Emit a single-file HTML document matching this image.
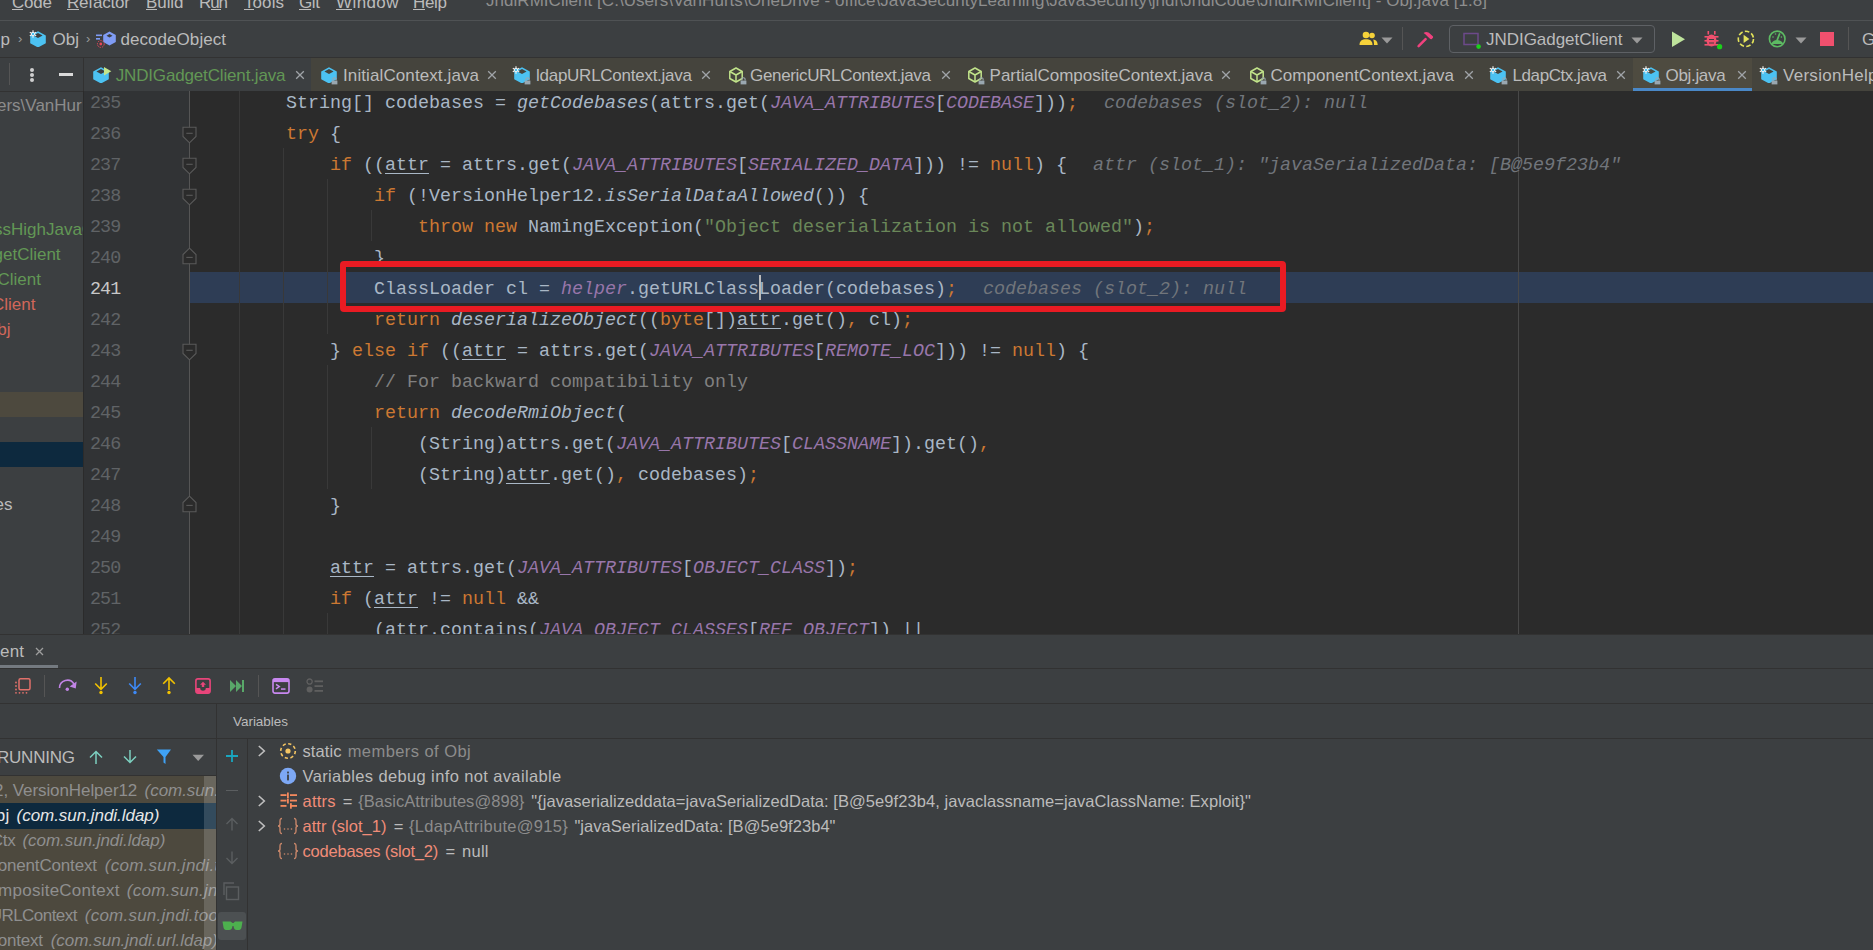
<!DOCTYPE html>
<html><head><meta charset="utf-8"><style>
html,body{margin:0;padding:0;}
body{width:1873px;height:950px;overflow:hidden;position:relative;background:#3C3F41;font-family:"Liberation Sans", sans-serif;}
.t{position:absolute;white-space:pre;line-height:0;font-family:"Liberation Sans", sans-serif;}

.cl,.hint,.ln{position:absolute;white-space:pre;font-family:"Liberation Mono",monospace;font-size:18.3333px;line-height:31px;height:31px}
.cl{color:#A9B7C6}
.k{color:#CC7832}.d{color:#A9B7C6}.c{color:#9876AA;font-style:italic}.i{font-style:italic}.s{color:#6A8759}.m{color:#808080}
.u{text-decoration:underline;text-underline-offset:3px;text-decoration-thickness:1px}
.hint{color:#71757B;font-style:italic}
.ln{color:#606366;font-size:18.3333px;letter-spacing:-0.9px}
.ln.cur{color:#C8C8C8}

</style></head><body>
<div class='t' style='left:12px;top:3.00px;font-size:17px;color:#BBBBBB;letter-spacing:-0.214px;'>Code</div>
<div class='t' style='left:67px;top:3.00px;font-size:17px;color:#BBBBBB;letter-spacing:-0.179px;'>Refactor</div>
<div class='t' style='left:146px;top:3.00px;font-size:17px;color:#BBBBBB;letter-spacing:-0.078px;'>Build</div>
<div class='t' style='left:199px;top:3.00px;font-size:17px;color:#BBBBBB;letter-spacing:-1.094px;'>Run</div>
<div class='t' style='left:244px;top:3.00px;font-size:17px;color:#BBBBBB;letter-spacing:0.078px;'>Tools</div>
<div class='t' style='left:299px;top:3.00px;font-size:17px;color:#BBBBBB;letter-spacing:-0.367px;'>Git</div>
<div class='t' style='left:336px;top:3.00px;font-size:17px;color:#BBBBBB;letter-spacing:0.406px;'>Window</div>
<div class='t' style='left:413px;top:3.00px;font-size:17px;color:#BBBBBB;letter-spacing:-0.323px;'>Help</div>
<div style='position:absolute;left:12px;top:9px;width:11px;height:1px;background:#BBBBBB;'></div>
<div style='position:absolute;left:67px;top:9px;width:12px;height:1px;background:#BBBBBB;'></div>
<div style='position:absolute;left:146px;top:9px;width:11px;height:1px;background:#BBBBBB;'></div>
<div style='position:absolute;left:211px;top:9px;width:10px;height:1px;background:#BBBBBB;'></div>
<div style='position:absolute;left:244px;top:9px;width:10px;height:1px;background:#BBBBBB;'></div>
<div style='position:absolute;left:299px;top:9px;width:12px;height:1px;background:#BBBBBB;'></div>
<div style='position:absolute;left:336px;top:9px;width:16px;height:1px;background:#BBBBBB;'></div>
<div style='position:absolute;left:413px;top:9px;width:12px;height:1px;background:#BBBBBB;'></div>
<div class='t' style='left:486px;top:1.00px;font-size:17px;color:#8E8E8E;letter-spacing:0.037px;'>JndiRMIClient [C:\Users\VanHurts\OneDrive - office\JavaSecurityLearning\JavaSecurity\jndi\JndiCode\JndiRMIClient] - Obj.java [1.8]</div>
<div style='position:absolute;left:0px;top:20px;width:1873px;height:1px;background:#4F5254;'></div>
<div style='position:absolute;left:0px;top:57px;width:1873px;height:1px;background:#323232;'></div>
<div class='t' style='left:0.5px;top:39.99px;font-size:17px;color:#BBBBBB;letter-spacing:0.000px;'>p</div>
<div class='t' style='left:18px;top:39.05px;font-size:13px;color:#9A9A9A;letter-spacing:0.000px;'>›</div>
<div class='t' style='left:52.5px;top:39.99px;font-size:17px;color:#BBBBBB;letter-spacing:0.016px;'>Obj</div>
<div class='t' style='left:86px;top:39.05px;font-size:13px;color:#9A9A9A;letter-spacing:0.000px;'>›</div>
<div class='t' style='left:120.5px;top:39.99px;font-size:17px;color:#BBBBBB;letter-spacing:0.054px;'>decodeObject</div>
<div class='t' style='left:1486px;top:39.99px;font-size:17px;color:#BBBBBB;letter-spacing:-0.034px;'>JNDIGadgetClient</div>
<div class='t' style='left:1862px;top:39.99px;font-size:17px;color:#BBBBBB;letter-spacing:0.000px;'>G</div>
<div style='position:absolute;left:83px;top:58px;width:1790px;height:33px;background:#45443D;'></div>
<div style='position:absolute;left:83px;top:58px;width:228px;height:33px;background:#3C3F41;'></div>
<div style='position:absolute;left:83px;top:58px;width:1px;height:33px;background:#323232;'></div>
<div style='position:absolute;left:1633px;top:58px;width:119px;height:33px;background:#4E4B40;'></div>
<div style='position:absolute;left:1633px;top:88px;width:119px;height:4px;background:#4A88C7;'></div>
<div style='position:absolute;left:9px;top:63px;width:1px;height:22px;background:#555555;'></div>
<div style='position:absolute;left:30px;top:68px;width:4px;height:4px;border-radius:2px;background:#CFCFCF'></div>
<div style='position:absolute;left:30px;top:73px;width:4px;height:4px;border-radius:2px;background:#CFCFCF'></div>
<div style='position:absolute;left:30px;top:78px;width:4px;height:4px;border-radius:2px;background:#CFCFCF'></div>
<div style='position:absolute;left:59px;top:73px;width:14px;height:3px;background:#DADADA;'></div>
<div class='t' style='left:115.7px;top:76.00px;font-size:17px;color:#629755;letter-spacing:-0.156px;'>JNDIGadgetClient.java</div>
<svg style='position:absolute;left:294.5px;top:70px' width='10' height='10' viewBox='0 0 10 10'><path d='M1.2 1.2L8.8 8.8M8.8 1.2L1.2 8.8' stroke='#A0A4A8' stroke-width='1.3'/></svg>
<div class='t' style='left:343px;top:76.00px;font-size:17px;color:#BBBBBB;letter-spacing:0.101px;'>InitialContext.java</div>
<svg style='position:absolute;left:486.5px;top:70px' width='10' height='10' viewBox='0 0 10 10'><path d='M1.2 1.2L8.8 8.8M8.8 1.2L1.2 8.8' stroke='#A0A4A8' stroke-width='1.3'/></svg>
<div class='t' style='left:536px;top:76.00px;font-size:17px;color:#BBBBBB;letter-spacing:-0.259px;'>ldapURLContext.java</div>
<svg style='position:absolute;left:700.5px;top:70px' width='10' height='10' viewBox='0 0 10 10'><path d='M1.2 1.2L8.8 8.8M8.8 1.2L1.2 8.8' stroke='#A0A4A8' stroke-width='1.3'/></svg>
<div class='t' style='left:750px;top:76.00px;font-size:17px;color:#BBBBBB;letter-spacing:-0.335px;'>GenericURLContext.java</div>
<svg style='position:absolute;left:940.5px;top:70px' width='10' height='10' viewBox='0 0 10 10'><path d='M1.2 1.2L8.8 8.8M8.8 1.2L1.2 8.8' stroke='#A0A4A8' stroke-width='1.3'/></svg>
<div class='t' style='left:989.6px;top:76.00px;font-size:17px;color:#BBBBBB;letter-spacing:-0.035px;'>PartialCompositeContext.java</div>
<svg style='position:absolute;left:1220.5px;top:70px' width='10' height='10' viewBox='0 0 10 10'><path d='M1.2 1.2L8.8 8.8M8.8 1.2L1.2 8.8' stroke='#A0A4A8' stroke-width='1.3'/></svg>
<div class='t' style='left:1270.4px;top:76.00px;font-size:17px;color:#BBBBBB;letter-spacing:0.060px;'>ComponentContext.java</div>
<svg style='position:absolute;left:1463.5px;top:70px' width='10' height='10' viewBox='0 0 10 10'><path d='M1.2 1.2L8.8 8.8M8.8 1.2L1.2 8.8' stroke='#A0A4A8' stroke-width='1.3'/></svg>
<div class='t' style='left:1512.6px;top:76.00px;font-size:17px;color:#BBBBBB;letter-spacing:-0.439px;'>LdapCtx.java</div>
<svg style='position:absolute;left:1615.5px;top:70px' width='10' height='10' viewBox='0 0 10 10'><path d='M1.2 1.2L8.8 8.8M8.8 1.2L1.2 8.8' stroke='#A0A4A8' stroke-width='1.3'/></svg>
<div class='t' style='left:1665.6px;top:76.00px;font-size:17px;color:#BBBBBB;letter-spacing:-0.339px;'>Obj.java</div>
<svg style='position:absolute;left:1736.5px;top:70px' width='10' height='10' viewBox='0 0 10 10'><path d='M1.2 1.2L8.8 8.8M8.8 1.2L1.2 8.8' stroke='#A0A4A8' stroke-width='1.3'/></svg>
<div class='t' style='left:1783px;top:76.00px;font-size:17px;color:#BBBBBB;letter-spacing:0.284px;'>VersionHelper12.java</div>
<div style='position:absolute;left:0;top:91px;width:83px;height:543px;overflow:hidden;background:#3C3F41'>
<div style='position:absolute;left:0px;top:301px;width:83px;height:25px;background:#4D493E;'></div>
<div style='position:absolute;left:0px;top:351px;width:83px;height:25px;background:#0D293E;'></div>
<div class='t' style='left:-3px;top:15.00px;font-size:17px;color:#8C8C8C;letter-spacing:0.000px;'>ers\VanHur</div>
<div class='t' style='left:-6px;top:139.00px;font-size:17px;color:#629755;letter-spacing:0.000px;'>ssHighJavaClient</div>
<div class='t' style='left:-6.5px;top:164.00px;font-size:17px;color:#629755;letter-spacing:0.000px;'>getClient</div>
<div class='t' style='left:-2.5px;top:189.00px;font-size:17px;color:#629755;letter-spacing:0.000px;'>Client</div>
<div class='t' style='left:-8px;top:214.00px;font-size:17px;color:#D1675A;letter-spacing:0.000px;'>Client</div>
<div class='t' style='left:-16px;top:239.00px;font-size:17px;color:#D1675A;letter-spacing:0.000px;'>Obj</div>
<div class='t' style='left:-48px;top:414.00px;font-size:17px;color:#BBBBBB;letter-spacing:0.000px;'>Classes</div>
</div>
<div style='position:absolute;left:83px;top:91px;width:1px;height:543px;background:#2B2B2B;'></div>
<div style='position:absolute;left:0px;top:91px;width:83px;height:1px;background:#323232;'></div>
<div id='ed' style='position:absolute;left:84px;top:91px;width:1789px;height:543px;overflow:hidden;background:#2B2B2B'>
<div style='position:absolute;left:0px;top:0px;width:106px;height:543px;background:#313335;'></div>
<div style='position:absolute;left:106px;top:181px;width:1789px;height:31px;background:#2E3D55;'></div>
<div style='position:absolute;left:0px;top:181px;width:106px;height:31px;background:#313335;'></div>
<div style='position:absolute;left:155px;top:0px;width:1px;height:543px;background:#393939;'></div>
<div style='position:absolute;left:199px;top:57px;width:1px;height:486px;background:#393939;'></div>
<div style='position:absolute;left:243px;top:88px;width:1px;height:155px;background:#393939;'></div>
<div style='position:absolute;left:243px;top:274px;width:1px;height:124px;background:#393939;'></div>
<div style='position:absolute;left:243px;top:522px;width:1px;height:21px;background:#393939;'></div>
<div style='position:absolute;left:287px;top:119px;width:1px;height:31px;background:#393939;'></div>
<div style='position:absolute;left:287px;top:336px;width:1px;height:62px;background:#393939;'></div>
<div style='position:absolute;left:1434px;top:0px;width:1px;height:543px;background:#484848;'></div>
<div style='position:absolute;left:105px;top:0px;width:1px;height:543px;background:#555555;'></div>
</div>
<div style='position:absolute;left:84px;top:91px;width:1789px;height:543px;overflow:hidden'>
<div class='hint' style='left:1020px;top:-3.5px'>codebases (slot_2): null</div>
<div class='cl' style='left:114px;top:-3.5px'><span class='d'>        String[] codebases = </span><span class='i'>getCodebases</span><span class='d'>(attrs.get(</span><span class='c'>JAVA_ATTRIBUTES</span><span class='d'>[</span><span class='c'>CODEBASE</span><span class='d'>]))</span><span class='k'>;</span></div>
<div class='ln' style='left:6px;top:-3.5px'>235</div>
<div class='cl' style='left:114px;top:27.5px'><span class='k'>        try </span><span class='d'>{</span></div>
<div class='ln' style='left:6px;top:27.5px'>236</div>
<div class='hint' style='left:1009px;top:58.5px'>attr (slot_1): &quot;javaSerializedData: [B@5e9f23b4&quot;</div>
<div class='cl' style='left:114px;top:58.5px'><span class='k'>            if </span><span class='d'>((</span><span class='u'>attr</span><span class='d'> = attrs.get(</span><span class='c'>JAVA_ATTRIBUTES</span><span class='d'>[</span><span class='c'>SERIALIZED_DATA</span><span class='d'>])) != </span><span class='k'>null</span><span class='d'>) {</span></div>
<div class='ln' style='left:6px;top:58.5px'>237</div>
<div class='cl' style='left:114px;top:89.5px'><span class='k'>                if </span><span class='d'>(!VersionHelper12.</span><span class='i'>isSerialDataAllowed</span><span class='d'>()) {</span></div>
<div class='ln' style='left:6px;top:89.5px'>238</div>
<div class='cl' style='left:114px;top:120.5px'><span class='k'>                    throw new </span><span class='d'>NamingException(</span><span class='s'>&quot;Object deserialization is not allowed&quot;</span><span class='d'>)</span><span class='k'>;</span></div>
<div class='ln' style='left:6px;top:120.5px'>239</div>
<div class='cl' style='left:114px;top:151.5px'><span class='d'>                }</span></div>
<div class='ln' style='left:6px;top:151.5px'>240</div>
<div class='hint' style='left:899px;top:182.5px'>codebases (slot_2): null</div>
<div class='cl' style='left:114px;top:182.5px'><span class='d'>                ClassLoader cl = </span><span class='c'>helper</span><span class='d'>.getURLClassLoader(codebases)</span><span class='k'>;</span></div>
<div class='ln cur' style='left:6px;top:182.5px'>241</div>
<div class='cl' style='left:114px;top:213.5px'><span class='k'>                return </span><span class='i'>deserializeObject</span><span class='d'>((</span><span class='k'>byte</span><span class='d'>[])</span><span class='u'>attr</span><span class='d'>.get()</span><span class='k'>,</span><span class='d'> cl)</span><span class='k'>;</span></div>
<div class='ln' style='left:6px;top:213.5px'>242</div>
<div class='cl' style='left:114px;top:244.5px'><span class='d'>            } </span><span class='k'>else if </span><span class='d'>((</span><span class='u'>attr</span><span class='d'> = attrs.get(</span><span class='c'>JAVA_ATTRIBUTES</span><span class='d'>[</span><span class='c'>REMOTE_LOC</span><span class='d'>])) != </span><span class='k'>null</span><span class='d'>) {</span></div>
<div class='ln' style='left:6px;top:244.5px'>243</div>
<div class='cl' style='left:114px;top:275.5px'><span class='m'>                // For backward compatibility only</span></div>
<div class='ln' style='left:6px;top:275.5px'>244</div>
<div class='cl' style='left:114px;top:306.5px'><span class='k'>                return </span><span class='i'>decodeRmiObject</span><span class='d'>(</span></div>
<div class='ln' style='left:6px;top:306.5px'>245</div>
<div class='cl' style='left:114px;top:337.5px'><span class='d'>                    (String)attrs.get(</span><span class='c'>JAVA_ATTRIBUTES</span><span class='d'>[</span><span class='c'>CLASSNAME</span><span class='d'>]).get()</span><span class='k'>,</span></div>
<div class='ln' style='left:6px;top:337.5px'>246</div>
<div class='cl' style='left:114px;top:368.5px'><span class='d'>                    (String)</span><span class='u'>attr</span><span class='d'>.get()</span><span class='k'>,</span><span class='d'> codebases)</span><span class='k'>;</span></div>
<div class='ln' style='left:6px;top:368.5px'>247</div>
<div class='cl' style='left:114px;top:399.5px'><span class='d'>            }</span></div>
<div class='ln' style='left:6px;top:399.5px'>248</div>
<div class='cl' style='left:114px;top:430.5px'></div>
<div class='ln' style='left:6px;top:430.5px'>249</div>
<div class='cl' style='left:114px;top:461.5px'>            <span class='u'>attr</span><span class='d'> = attrs.get(</span><span class='c'>JAVA_ATTRIBUTES</span><span class='d'>[</span><span class='c'>OBJECT_CLASS</span><span class='d'>])</span><span class='k'>;</span></div>
<div class='ln' style='left:6px;top:461.5px'>250</div>
<div class='cl' style='left:114px;top:492.5px'><span class='k'>            if </span><span class='d'>(</span><span class='u'>attr</span><span class='d'> != </span><span class='k'>null </span><span class='d'>&amp;&amp;</span></div>
<div class='ln' style='left:6px;top:492.5px'>251</div>
<div class='cl' style='left:114px;top:523.5px'><span class='d'>                (attr.contains(</span><span class='c'>JAVA_OBJECT_CLASSES</span><span class='d'>[</span><span class='c'>REF_OBJECT</span><span class='d'>]) ||</span></div>
<div class='ln' style='left:6px;top:523.5px'>252</div>
</div>
<div style='position:absolute;left:759px;top:275px;width:2px;height:25px;background:#BBBBBB;'></div>
<div style='position:absolute;left:339.5px;top:261px;width:934.5px;height:39px;border:6px solid #E91B23;border-radius:4px'></div>
<div style='position:absolute;left:0px;top:634px;width:1873px;height:316px;background:#3C3F41;'></div>
<div style='position:absolute;left:0px;top:634px;width:1873px;height:1px;background:#323232;'></div>
<div class='t' style='left:0px;top:652.00px;font-size:17px;color:#BBBBBB;letter-spacing:0.180px;'>ent</div>
<svg style='position:absolute;left:35px;top:647px' width='9' height='9' viewBox='0 0 9 9'><path d='M1 1L8 8M8 1L1 8' stroke='#9E9E9E' stroke-width='1.3'/></svg>
<div style='position:absolute;left:0px;top:665px;width:58px;height:3px;background:#747A80;'></div>
<div style='position:absolute;left:0px;top:668px;width:1873px;height:1px;background:#323232;'></div>
<div style='position:absolute;left:0px;top:703px;width:1873px;height:1px;background:#323232;'></div>
<div style='position:absolute;left:44px;top:675px;width:1px;height:22px;background:#555555;'></div>
<div style='position:absolute;left:258px;top:675px;width:1px;height:22px;background:#555555;'></div>
<div style='position:absolute;left:216px;top:704px;width:1px;height:246px;background:#323232;'></div>
<div class='t' style='left:233px;top:721.92px;font-size:13.5px;color:#BBBBBB;letter-spacing:-0.035px;'>Variables</div>
<div style='position:absolute;left:0px;top:738px;width:1873px;height:1px;background:#323232;'></div>
<div class='t' style='left:-3px;top:758.00px;font-size:17px;color:#BBBBBB;letter-spacing:-0.224px;'>RUNNING</div>
<div style='position:absolute;left:0px;top:775px;width:216px;height:1px;background:#323232;'></div>
<div style='position:absolute;left:0px;top:776px;width:216px;height:174px;background:#4D493E;'></div>
<div style='position:absolute;left:0px;top:803px;width:216px;height:26px;background:#0D293E;'></div>
<div style='position:absolute;left:0;top:776px;width:216px;height:174px;overflow:hidden'>
<div class='t' style='left:-6px;top:14.50px;font-size:17px;color:#8F8F8F;letter-spacing:-0.076px;'>2, VersionHelper12</div>
<div class='t' style='left:144.6px;top:14.50px;font-size:17px;color:#8F8F8F;letter-spacing:-0.046px;font-style:italic'>(com.sun.jndi.ldap)</div>
<div class='t' style='left:-17.5px;top:39.99px;font-size:17px;color:#E6E6E6;letter-spacing:0.116px;'>Obj</div>
<div class='t' style='left:16.6px;top:39.99px;font-size:17px;color:#E6E6E6;letter-spacing:-0.046px;font-style:italic'>(com.sun.jndi.ldap)</div>
<div class='t' style='left:-46px;top:65.00px;font-size:17px;color:#8F8F8F;letter-spacing:-0.271px;'>LdapCtx</div>
<div class='t' style='left:22.5px;top:65.00px;font-size:17px;color:#8F8F8F;letter-spacing:-0.046px;font-style:italic'>(com.sun.jndi.ldap)</div>
<div class='t' style='left:-47px;top:90.00px;font-size:17px;color:#8F8F8F;letter-spacing:-0.166px;'>ComponentContext</div>
<div class='t' style='left:104.7px;top:90.00px;font-size:17px;color:#8F8F8F;letter-spacing:0.278px;font-style:italic'>(com.sun.jndi.toolkit.ctx)</div>
<div class='t' style='left:-74px;top:115.00px;font-size:17px;color:#8F8F8F;letter-spacing:0.244px;'>PartialCompositeContext</div>
<div class='t' style='left:126.8px;top:115.00px;font-size:17px;color:#8F8F8F;letter-spacing:0.274px;font-style:italic'>(com.sun.jndi.toolkit.ctx)</div>
<div class='t' style='left:-66px;top:140.00px;font-size:17px;color:#8F8F8F;letter-spacing:-0.545px;'>GenericURLContext</div>
<div class='t' style='left:84.8px;top:140.00px;font-size:17px;color:#8F8F8F;letter-spacing:0.227px;font-style:italic'>(com.sun.jndi.toolkit.url)</div>
<div class='t' style='left:-79px;top:165.00px;font-size:17px;color:#8F8F8F;letter-spacing:-0.212px;'>ldapURLContext</div>
<div class='t' style='left:50.7px;top:165.00px;font-size:17px;color:#8F8F8F;letter-spacing:0.002px;font-style:italic'>(com.sun.jndi.url.ldap)</div>
</div>
<div style='position:absolute;left:204px;top:776px;width:12px;height:174px;background:rgba(255,255,255,0.16);'></div>
<div style='position:absolute;left:247px;top:739px;width:1px;height:211px;background:#323232;'></div>
<div style='position:absolute;left:218px;top:912px;width:28px;height:28px;background:#4C5052;border-radius:3px'></div>
<div class='t' style='left:302.5px;top:751.13px;font-size:16.5px;color:#BBBBBB;letter-spacing:0.097px;'>static</div>
<div class='t' style='left:347.7px;top:751.13px;font-size:16.5px;color:#8C8C8C;letter-spacing:0.433px;'>members of Obj</div>
<div class='t' style='left:302.5px;top:776.13px;font-size:16.5px;color:#BBBBBB;letter-spacing:0.374px;'>Variables debug info not available</div>
<div class='t' style='left:302.5px;top:801.13px;font-size:16.5px;color:#F08C78;letter-spacing:0.227px;'>attrs</div>
<div class='t' style='left:342.8px;top:801.13px;font-size:16.5px;color:#BBBBBB;letter-spacing:0.000px;'>=</div>
<div class='t' style='left:358.2px;top:801.13px;font-size:16.5px;color:#8C8C8C;letter-spacing:0.042px;'>{BasicAttributes@898}</div>
<div class='t' style='left:531.2px;top:801.13px;font-size:16.5px;color:#BBBBBB;letter-spacing:0.057px;'>&quot;{javaserializeddata=javaSerializedData: [B@5e9f23b4, javaclassname=javaClassName: Exploit}&quot;</div>
<div class='t' style='left:302.5px;top:826.13px;font-size:16.5px;color:#F08C78;letter-spacing:0.046px;'>attr (slot_1)</div>
<div class='t' style='left:393.8px;top:826.13px;font-size:16.5px;color:#BBBBBB;letter-spacing:0.000px;'>=</div>
<div class='t' style='left:409px;top:826.13px;font-size:16.5px;color:#8C8C8C;letter-spacing:0.291px;'>{LdapAttribute@915}</div>
<div class='t' style='left:574.4px;top:826.13px;font-size:16.5px;color:#BBBBBB;letter-spacing:0.046px;'>&quot;javaSerializedData: [B@5e9f23b4&quot;</div>
<div class='t' style='left:302.5px;top:851.13px;font-size:16.5px;color:#F08C78;letter-spacing:-0.213px;'>codebases (slot_2)</div>
<div class='t' style='left:445.6px;top:851.13px;font-size:16.5px;color:#BBBBBB;letter-spacing:0.000px;'>=</div>
<div class='t' style='left:462px;top:851.13px;font-size:16.5px;color:#BBBBBB;letter-spacing:0.271px;'>null</div>
<svg style='position:absolute;left:93.2px;top:66.6px' width='16' height='16.7' viewBox='0 0 16 16.7' preserveAspectRatio='none'><path d='M8 0.2L15.8 4.4V12.3L8 16.5L0.2 12.3V4.4Z M8 2.1L3.4 4.6L8 7.1L12.6 4.6Z' fill='#4CC2F2' fill-rule='evenodd'/></svg>
<svg style='position:absolute;left:103.7px;top:66.6px' width='8' height='9' viewBox='0 0 8 9'><path d='M0 0L7.3 4.3L0 8.6Z' fill='#C5E68A'/></svg>
<svg style='position:absolute;left:320.5px;top:66.6px' width='16' height='16.7' viewBox='0 0 16 16.7' preserveAspectRatio='none'><path d='M8 0.2L15.8 4.4V12.3L8 16.5L0.2 12.3V4.4Z M8 2.1L3.4 4.6L8 7.1L12.6 4.6Z' fill='#4CC2F2' fill-rule='evenodd'/></svg>
<svg style='position:absolute;left:331.0px;top:76.8px' width='7' height='8' viewBox='0 0 7 8' preserveAspectRatio='none'><path d='M1.9 3.6V2.3A1.6 1.6 0 0 1 5.1 2.3V3.6' fill='none' stroke='#9AA7B0' stroke-width='1.1'/><rect x='0.6' y='3.6' width='5.8' height='3.8' fill='#9AA7B0'/></svg>
<svg style='position:absolute;left:513.5px;top:66.6px' width='16' height='16.7' viewBox='0 0 16 16.7' preserveAspectRatio='none'><path d='M8 0.2L15.8 4.4V12.3L8 16.5L0.2 12.3V4.4Z M8 2.1L3.4 4.6L8 7.1L12.6 4.6Z' fill='#4CC2F2' fill-rule='evenodd'/></svg>
<svg style='position:absolute;left:512.4px;top:66.0px' width='8' height='8' viewBox='0 0 8 8' preserveAspectRatio='none'><g stroke='#F4F4F4' stroke-width='1.1'><path d='M4 0.3V7.7M0.8 2.15L7.2 5.85M0.8 5.85L7.2 2.15'/></g><circle cx='4' cy='4' r='1.7' fill='#4CC2F2' stroke='#F4F4F4' stroke-width='0.9'/></svg>
<svg style='position:absolute;left:524.0px;top:76.8px' width='7' height='8' viewBox='0 0 7 8' preserveAspectRatio='none'><path d='M1.9 3.6V2.3A1.6 1.6 0 0 1 5.1 2.3V3.6' fill='none' stroke='#9AA7B0' stroke-width='1.1'/><rect x='0.6' y='3.6' width='5.8' height='3.8' fill='#9AA7B0'/></svg>
<svg style='position:absolute;left:728.3px;top:66.8px' width='16' height='16' viewBox='0 0 16 16' preserveAspectRatio='none'><g fill='none' stroke='#C1E38A' stroke-width='1.5' stroke-linejoin='round'><path d='M8 1L14.2 4.5V11.5L8 15L1.8 11.5V4.5Z'/><path d='M1.8 4.5L8 8L14.2 4.5M8 8V15'/></g></svg>
<svg style='position:absolute;left:739.5px;top:77px' width='7' height='8' viewBox='0 0 7 8' preserveAspectRatio='none'><path d='M1.9 3.6V2.3A1.6 1.6 0 0 1 5.1 2.3V3.6' fill='none' stroke='#9AA7B0' stroke-width='1.1'/><rect x='0.6' y='3.6' width='5.8' height='3.8' fill='#9AA7B0'/></svg>
<svg style='position:absolute;left:967px;top:66.8px' width='16' height='16' viewBox='0 0 16 16' preserveAspectRatio='none'><g fill='none' stroke='#C1E38A' stroke-width='1.5' stroke-linejoin='round'><path d='M8 1L14.2 4.5V11.5L8 15L1.8 11.5V4.5Z'/><path d='M1.8 4.5L8 8L14.2 4.5M8 8V15'/></g></svg>
<svg style='position:absolute;left:978px;top:77px' width='7' height='8' viewBox='0 0 7 8' preserveAspectRatio='none'><path d='M1.9 3.6V2.3A1.6 1.6 0 0 1 5.1 2.3V3.6' fill='none' stroke='#9AA7B0' stroke-width='1.1'/><rect x='0.6' y='3.6' width='5.8' height='3.8' fill='#9AA7B0'/></svg>
<svg style='position:absolute;left:1248.5px;top:66.8px' width='16' height='16' viewBox='0 0 16 16' preserveAspectRatio='none'><g fill='none' stroke='#C1E38A' stroke-width='1.5' stroke-linejoin='round'><path d='M8 1L14.2 4.5V11.5L8 15L1.8 11.5V4.5Z'/><path d='M1.8 4.5L8 8L14.2 4.5M8 8V15'/></g></svg>
<svg style='position:absolute;left:1259.5px;top:77px' width='7' height='8' viewBox='0 0 7 8' preserveAspectRatio='none'><path d='M1.9 3.6V2.3A1.6 1.6 0 0 1 5.1 2.3V3.6' fill='none' stroke='#9AA7B0' stroke-width='1.1'/><rect x='0.6' y='3.6' width='5.8' height='3.8' fill='#9AA7B0'/></svg>
<svg style='position:absolute;left:1490px;top:66.6px' width='16' height='16.7' viewBox='0 0 16 16.7' preserveAspectRatio='none'><path d='M8 0.2L15.8 4.4V12.3L8 16.5L0.2 12.3V4.4Z M8 2.1L3.4 4.6L8 7.1L12.6 4.6Z' fill='#4CC2F2' fill-rule='evenodd'/></svg>
<svg style='position:absolute;left:1488.9px;top:66.0px' width='8' height='8' viewBox='0 0 8 8' preserveAspectRatio='none'><g stroke='#F4F4F4' stroke-width='1.1'><path d='M4 0.3V7.7M0.8 2.15L7.2 5.85M0.8 5.85L7.2 2.15'/></g><circle cx='4' cy='4' r='1.7' fill='#4CC2F2' stroke='#F4F4F4' stroke-width='0.9'/></svg>
<svg style='position:absolute;left:1500.5px;top:76.8px' width='7' height='8' viewBox='0 0 7 8' preserveAspectRatio='none'><path d='M1.9 3.6V2.3A1.6 1.6 0 0 1 5.1 2.3V3.6' fill='none' stroke='#9AA7B0' stroke-width='1.1'/><rect x='0.6' y='3.6' width='5.8' height='3.8' fill='#9AA7B0'/></svg>
<svg style='position:absolute;left:1643.1px;top:66.6px' width='16' height='16.7' viewBox='0 0 16 16.7' preserveAspectRatio='none'><path d='M8 0.2L15.8 4.4V12.3L8 16.5L0.2 12.3V4.4Z M8 2.1L3.4 4.6L8 7.1L12.6 4.6Z' fill='#4CC2F2' fill-rule='evenodd'/></svg>
<svg style='position:absolute;left:1642.0px;top:66.0px' width='8' height='8' viewBox='0 0 8 8' preserveAspectRatio='none'><g stroke='#F4F4F4' stroke-width='1.1'><path d='M4 0.3V7.7M0.8 2.15L7.2 5.85M0.8 5.85L7.2 2.15'/></g><circle cx='4' cy='4' r='1.7' fill='#4CC2F2' stroke='#F4F4F4' stroke-width='0.9'/></svg>
<svg style='position:absolute;left:1653.6px;top:76.8px' width='7' height='8' viewBox='0 0 7 8' preserveAspectRatio='none'><path d='M1.9 3.6V2.3A1.6 1.6 0 0 1 5.1 2.3V3.6' fill='none' stroke='#9AA7B0' stroke-width='1.1'/><rect x='0.6' y='3.6' width='5.8' height='3.8' fill='#9AA7B0'/></svg>
<svg style='position:absolute;left:1760.5px;top:66.6px' width='16' height='16.7' viewBox='0 0 16 16.7' preserveAspectRatio='none'><path d='M8 0.2L15.8 4.4V12.3L8 16.5L0.2 12.3V4.4Z M8 2.1L3.4 4.6L8 7.1L12.6 4.6Z' fill='#4CC2F2' fill-rule='evenodd'/></svg>
<svg style='position:absolute;left:1759.4px;top:66.0px' width='8' height='8' viewBox='0 0 8 8' preserveAspectRatio='none'><g stroke='#F4F4F4' stroke-width='1.1'><path d='M4 0.3V7.7M0.8 2.15L7.2 5.85M0.8 5.85L7.2 2.15'/></g><circle cx='4' cy='4' r='1.7' fill='#4CC2F2' stroke='#F4F4F4' stroke-width='0.9'/></svg>
<svg style='position:absolute;left:1771.0px;top:76.8px' width='7' height='8' viewBox='0 0 7 8' preserveAspectRatio='none'><path d='M1.9 3.6V2.3A1.6 1.6 0 0 1 5.1 2.3V3.6' fill='none' stroke='#9AA7B0' stroke-width='1.1'/><rect x='0.6' y='3.6' width='5.8' height='3.8' fill='#9AA7B0'/></svg>
<svg style='position:absolute;left:30px;top:30.5px' width='16' height='16.7' viewBox='0 0 16 16.7' preserveAspectRatio='none'><path d='M8 0.2L15.8 4.4V12.3L8 16.5L0.2 12.3V4.4Z M8 2.1L3.4 4.6L8 7.1L12.6 4.6Z' fill='#4CC2F2' fill-rule='evenodd'/></svg>
<svg style='position:absolute;left:28.9px;top:29.9px' width='8' height='8' viewBox='0 0 8 8' preserveAspectRatio='none'><g stroke='#F4F4F4' stroke-width='1.1'><path d='M4 0.3V7.7M0.8 2.15L7.2 5.85M0.8 5.85L7.2 2.15'/></g><circle cx='4' cy='4' r='1.7' fill='#4CC2F2' stroke='#F4F4F4' stroke-width='0.9'/></svg>
<svg style='position:absolute;left:95px;top:29px' width='22' height='19' viewBox='0 0 22 19'><path d='M14.5 2.6L20.8 6.1V12.9L14.5 16.4L8.2 12.9V6.1Z' fill='#7F9CF5'/><path d='M14.5 5L17.5 6.8L14.5 8.6L11.5 6.8Z' fill='#3C3F41'/><rect x='1' y='5.5' width='6' height='1.6' fill='#7F9CF5'/><rect x='1' y='9' width='4' height='1.6' fill='#7F9CF5'/><circle cx='5.8' cy='15' r='3.4' fill='none' stroke='#E8455A' stroke-width='1' stroke-dasharray='1.5 1'/><circle cx='5.8' cy='15' r='1.4' fill='#E8455A'/></svg>
<svg style='position:absolute;left:1359px;top:31px' width='20' height='15' viewBox='0 0 20 15'><circle cx='7' cy='4' r='3.3' fill='#F6D23A'/><path d='M0.5 14C0.5 10 3 8.3 7 8.3S13.5 10 13.5 14Z' fill='#F6D23A'/><circle cx='13' cy='4.5' r='2.8' fill='#F6D23A'/><path d='M14.2 8.6C17 9 18.7 10.6 18.7 14H15C15 11.8 14.8 10 14.2 8.6Z' fill='#F6D23A'/></svg>
<svg style='position:absolute;left:1381px;top:37px' width='12' height='7' viewBox='0 0 12 7'><path d='M0.5 0.5H11.5L6 6.5Z' fill='#9A9A9A'/></svg>
<div style='position:absolute;left:1402px;top:27px;width:1px;height:23px;background:#555555;'></div>
<svg style='position:absolute;left:1415px;top:30px' width='20' height='19' viewBox='0 0 20 19'><path d='M3.6 16.2L10.6 9.2' stroke='#F0417E' stroke-width='2.5' stroke-linecap='round'/><path d='M8.6 2.9C10.8 1.2 13.6 1.9 15.3 3.9L17.8 6.3C18.3 6.9 18.2 7.6 17.7 8.1L16.8 8.9C16.2 9.4 15.5 9.3 15 8.8L12.3 6.2C11.2 5 10.1 3.9 8.6 2.9Z' fill='#F0417E'/></svg>
<div style='position:absolute;left:1449px;top:25px;width:204px;height:26px;border:1px solid #5E6165;border-radius:4px'></div>
<svg style='position:absolute;left:1462px;top:31px' width='20' height='18' viewBox='0 0 20 18'><rect x='2' y='2.5' width='14' height='11' fill='none' stroke='#6C4A8A' stroke-width='1.5'/><circle cx='16.6' cy='15.6' r='2.3' fill='#1BD11B'/></svg>
<svg style='position:absolute;left:1631px;top:37px' width='12' height='7' viewBox='0 0 12 7'><path d='M0.5 0.5H11.5L6 6.5Z' fill='#9A9A9A'/></svg>
<svg style='position:absolute;left:1671px;top:31px' width='15' height='17' viewBox='0 0 15 17'><path d='M1 0.5L14 8.3L1 16Z' fill='#BEE39C'/></svg>
<svg style='position:absolute;left:1703px;top:30px' width='20' height='20' viewBox='0 0 20 20'><g fill='#F0506E'><ellipse cx='8.5' cy='10.5' rx='5' ry='6'/><rect x='1.5' y='6' width='14' height='1.6'/><rect x='1.5' y='10' width='14' height='1.6'/><rect x='1.5' y='14' width='14' height='1.6'/><rect x='4.5' y='1' width='1.6' height='3.5'/><rect x='11' y='1' width='1.6' height='3.5'/></g><rect x='6' y='9' width='5' height='1' fill='#3C3F41'/><rect x='6' y='12.5' width='5' height='1' fill='#3C3F41'/><circle cx='16.6' cy='16.7' r='2.6' fill='#1BD11B'/></svg>
<svg style='position:absolute;left:1736px;top:29px' width='20' height='20' viewBox='0 0 20 20'><circle cx='9.9' cy='9.9' r='7.6' fill='none' stroke='#E3E35A' stroke-width='1.6' stroke-dasharray='4.6 2.3'/><path d='M7.6 5.8L13.4 9.9L7.6 14Z' fill='#E3E35A'/></svg>
<svg style='position:absolute;left:1768px;top:29px' width='20' height='20' viewBox='0 0 20 20'><circle cx='9.2' cy='9.9' r='7.8' fill='none' stroke='#5DBB63' stroke-width='1.6'/><path d='M3.2 15A6.5 6.5 0 0 1 15.2 15Z' fill='#5DBB63'/><path d='M9.2 11L11.5 5' stroke='#5DBB63' stroke-width='1.8' stroke-linecap='round'/><circle cx='5' cy='8' r='0.8' fill='#5DBB63'/><circle cx='13.4' cy='8' r='0.8' fill='#5DBB63'/><circle cx='7.5' cy='5' r='0.8' fill='#5DBB63'/></svg>
<svg style='position:absolute;left:1795px;top:37px' width='12' height='7' viewBox='0 0 12 7'><path d='M0.5 0.5H11.5L6 6.5Z' fill='#9A9A9A'/></svg>
<div style='position:absolute;left:1820px;top:32px;width:14px;height:14px;background:#F0506E;'></div>
<div style='position:absolute;left:1848px;top:27px;width:1px;height:23px;background:#555555;'></div>
<svg style='position:absolute;left:182px;top:126px' width='15' height='18' viewBox='0 0 15 18'><path d='M1 1.2H14V10.5L7.5 16.8L1 10.5Z' fill='#2B2B2B' stroke='#5A5A5A' stroke-width='1.1'/><path d='M4.3 7.3H10.7' stroke='#5A5A5A' stroke-width='1.1'/></svg>
<svg style='position:absolute;left:182px;top:157px' width='15' height='18' viewBox='0 0 15 18'><path d='M1 1.2H14V10.5L7.5 16.8L1 10.5Z' fill='#2B2B2B' stroke='#5A5A5A' stroke-width='1.1'/><path d='M4.3 7.3H10.7' stroke='#5A5A5A' stroke-width='1.1'/></svg>
<svg style='position:absolute;left:182px;top:188px' width='15' height='18' viewBox='0 0 15 18'><path d='M1 1.2H14V10.5L7.5 16.8L1 10.5Z' fill='#2B2B2B' stroke='#5A5A5A' stroke-width='1.1'/><path d='M4.3 7.3H10.7' stroke='#5A5A5A' stroke-width='1.1'/></svg>
<svg style='position:absolute;left:182px;top:343px' width='15' height='18' viewBox='0 0 15 18'><path d='M1 1.2H14V10.5L7.5 16.8L1 10.5Z' fill='#2B2B2B' stroke='#5A5A5A' stroke-width='1.1'/><path d='M4.3 7.3H10.7' stroke='#5A5A5A' stroke-width='1.1'/></svg>
<svg style='position:absolute;left:182px;top:247px' width='15' height='18' viewBox='0 0 15 18'><path d='M7.5 1.2L14 7.5V16.8H1V7.5Z' fill='#2B2B2B' stroke='#5A5A5A' stroke-width='1.1'/><path d='M4.3 10.4H10.7' stroke='#5A5A5A' stroke-width='1.1'/></svg>
<svg style='position:absolute;left:182px;top:495px' width='15' height='18' viewBox='0 0 15 18'><path d='M7.5 1.2L14 7.5V16.8H1V7.5Z' fill='#2B2B2B' stroke='#5A5A5A' stroke-width='1.1'/><path d='M4.3 10.4H10.7' stroke='#5A5A5A' stroke-width='1.1'/></svg>
<svg style='position:absolute;left:14px;top:677px' width='18' height='18' viewBox='0 0 18 18'><rect x='5' y='1.8' width='11' height='11' rx='1.5' fill='none' stroke='#E0706A' stroke-width='1.5'/><g fill='#E0706A'><circle cx='2' cy='5.5' r='0.9'/><circle cx='2' cy='9' r='0.9'/><circle cx='2' cy='12.5' r='0.9'/><circle cx='2' cy='15.8' r='0.9'/><circle cx='5.5' cy='15.8' r='0.9'/><circle cx='9' cy='15.8' r='0.9'/><circle cx='12.5' cy='15.8' r='0.9'/></g></svg>
<svg style='position:absolute;left:58px;top:677px' width='20' height='16' viewBox='0 0 20 16'><path d='M1.5 11A7.8 7.8 0 0 1 16 7' fill='none' stroke='#C184E6' stroke-width='1.6'/><path d='M18.6 4.5L17.8 11.6L11.6 9.6Z' fill='#C184E6'/><circle cx='9.3' cy='12.2' r='1.7' fill='#C184E6'/></svg>
<svg style='position:absolute;left:94px;top:676px' width='14' height='19' viewBox='0 0 14 19'><path d='M7 1V13M1.2 7.5L7 13.3L12.8 7.5' fill='none' stroke='#F2C200' stroke-width='1.6'/><circle cx='7' cy='16.5' r='1.7' fill='#F2C200'/></svg>
<svg style='position:absolute;left:128px;top:676px' width='14' height='19' viewBox='0 0 14 19'><path d='M7 1V13M1.2 7.5L7 13.3L12.8 7.5' fill='none' stroke='#3D8AF7' stroke-width='1.6'/><circle cx='7' cy='16.5' r='1.7' fill='#3D8AF7'/></svg>
<svg style='position:absolute;left:162px;top:676px' width='14' height='19' viewBox='0 0 14 19'><path d='M7 14V2M1.2 7.8L7 2L12.8 7.8' fill='none' stroke='#F2C200' stroke-width='1.6'/><circle cx='7' cy='16.5' r='1.7' fill='#F2C200'/></svg>
<svg style='position:absolute;left:195px;top:678px' width='16' height='16' viewBox='0 0 16 16'><rect x='0.9' y='0.9' width='14.2' height='14.2' rx='2' fill='none' stroke='#E8457A' stroke-width='1.6'/><path d='M0.9 10H5.2A2.8 2.8 0 0 0 10.8 10H15.1V13.1A2 2 0 0 1 13.1 15.1H2.9A2 2 0 0 1 0.9 13.1Z' fill='#E8457A'/><path d='M8 3.8L11 6.8H9.2V9H6.8V6.8H5Z' fill='#E8457A'/></svg>
<svg style='position:absolute;left:229px;top:679px' width='16' height='14' viewBox='0 0 16 14'><path d='M1 1L7 7L1 13Z M7 1L13 7L7 13Z' fill='#59A869'/><rect x='13' y='1' width='2' height='12' fill='#59A869'/></svg>
<svg style='position:absolute;left:272px;top:678px' width='18' height='16' viewBox='0 0 18 16'><rect x='1' y='0.9' width='16' height='14.2' rx='2' fill='none' stroke='#C888F0' stroke-width='1.6'/><rect x='1' y='0.9' width='16' height='3.2' fill='#C888F0'/><path d='M4 6.3L7.3 8.6L4 10.9' fill='none' stroke='#C888F0' stroke-width='1.5'/><rect x='9' y='10.3' width='4.5' height='1.5' fill='#C888F0'/></svg>
<svg style='position:absolute;left:305px;top:678px' width='20' height='16' viewBox='0 0 20 16'><circle cx='4.6' cy='3.6' r='2.6' fill='none' stroke='#5F5F5F' stroke-width='1.3'/><circle cx='4.6' cy='11.6' r='3' fill='#5F5F5F'/><g fill='#5F5F5F'><rect x='9.5' y='2.4' width='8.5' height='1.8'/><rect x='9.5' y='7.2' width='8.5' height='1.8'/><rect x='9.5' y='12' width='8.5' height='1.8'/></g></svg>
<svg style='position:absolute;left:89px;top:750px' width='14' height='15' viewBox='0 0 14 15'><path d='M7 14V1.5M1 7.5L7 1.5L13 7.5' fill='none' stroke='#7CCFBF' stroke-width='1.5'/></svg>
<svg style='position:absolute;left:123px;top:749px' width='14' height='15' viewBox='0 0 14 15'><path d='M7 1V13.5M1 7.5L7 13.5L13 7.5' fill='none' stroke='#7CCFBF' stroke-width='1.5'/></svg>
<svg style='position:absolute;left:156px;top:749px' width='16' height='16' viewBox='0 0 16 16'><path d='M0.8 0.5H15L9.5 8V15L7.5 13.5V8Z' fill='#3FA2F5'/></svg>
<svg style='position:absolute;left:192px;top:754px' width='13' height='8' viewBox='0 0 13 8'><path d='M0.5 0.8H12L6.2 7Z' fill='#9A9A9A'/></svg>
<svg style='position:absolute;left:225px;top:749px' width='14' height='14' viewBox='0 0 14 14'><path d='M7 1V13M1 7H13' stroke='#19A6BF' stroke-width='1.8'/></svg>
<div style='position:absolute;left:226px;top:789.5px;width:12px;height:1.5px;background:#5B5E60;'></div>
<svg style='position:absolute;left:225px;top:817px' width='14' height='14' viewBox='0 0 14 14'><path d='M7 13.5V1.5M1.5 7L7 1.5L12.5 7' fill='none' stroke='#5B5E60' stroke-width='1.4'/></svg>
<svg style='position:absolute;left:225px;top:851px' width='14' height='14' viewBox='0 0 14 14'><path d='M7 0.5V12.5M1.5 7L7 12.5L12.5 7' fill='none' stroke='#5B5E60' stroke-width='1.4'/></svg>
<svg style='position:absolute;left:223px;top:882px' width='18' height='19' viewBox='0 0 18 19'><path d='M1 13V1H11' fill='none' stroke='#5B5E60' stroke-width='1.4'/><rect x='3.5' y='5' width='12' height='12.5' fill='none' stroke='#5B5E60' stroke-width='1.4'/></svg>
<svg style='position:absolute;left:222px;top:920px' width='21' height='11' viewBox='0 0 21 11'><path d='M0.5 1.5H8.5L10.5 3H11.5L13 1.5H20.5L19.5 7.5C19 9.5 18 10 16 10H14.5C13 10 12 9 11.5 6H10.5C10 9 9 10 7 10H5C3 10 2 9.5 1.5 7.5Z' fill='#4DB04E'/></svg>
<svg style='position:absolute;left:257px;top:745px' width='10' height='12' viewBox='0 0 10 12'><path d='M1.8 1L7.3 6L1.8 11' fill='none' stroke='#BFBFBF' stroke-width='1.6'/></svg>
<svg style='position:absolute;left:257px;top:795px' width='10' height='12' viewBox='0 0 10 12'><path d='M1.8 1L7.3 6L1.8 11' fill='none' stroke='#BFBFBF' stroke-width='1.6'/></svg>
<svg style='position:absolute;left:257px;top:820px' width='10' height='12' viewBox='0 0 10 12'><path d='M1.8 1L7.3 6L1.8 11' fill='none' stroke='#BFBFBF' stroke-width='1.6'/></svg>
<svg style='position:absolute;left:279px;top:742px' width='18' height='18' viewBox='0 0 18 18'><circle cx='9' cy='9' r='7.3' fill='none' stroke='#F4C563' stroke-width='1.6' stroke-dasharray='3.2 2.53'/><circle cx='9' cy='9' r='2.6' fill='#F4C563'/></svg>
<svg style='position:absolute;left:279px;top:767px' width='18' height='18' viewBox='0 0 18 18'><circle cx='9' cy='9' r='8.2' fill='#7DA8F5'/><rect x='8.1' y='4.6' width='1.8' height='1.8' fill='#3C3F41'/><rect x='8.1' y='7.6' width='1.8' height='5.8' fill='#3C3F41'/></svg>
<svg style='position:absolute;left:280px;top:792px' width='18' height='18' viewBox='0 0 18 18'><g fill='#F4895E'><rect x='0.5' y='2.2' width='6' height='1.8'/><rect x='10' y='2.2' width='7' height='1.8'/><rect x='7' y='0.5' width='1.8' height='5.5'/><rect x='0.5' y='7.7' width='6' height='1.8'/><rect x='10' y='7.7' width='7' height='1.8'/><rect x='7' y='6.5' width='1.8' height='5'/><rect x='0.5' y='13' width='6' height='1.8'/><rect x='10' y='13' width='7' height='1.8'/><rect x='10' y='11.2' width='1.8' height='5.5'/></g></svg>
<svg style='position:absolute;left:277px;top:817px' width='22' height='18' viewBox='0 0 22 18'><g fill='none' stroke='#C9876A' stroke-width='1.4'><path d='M5 1.5C3 1.5 3 2.5 3 4.5V7C3 8.2 2.3 9 1 9C2.3 9 3 9.8 3 11V13.5C3 15.5 3 16.5 5 16.5'/><path d='M17 1.5C19 1.5 19 2.5 19 4.5V7C19 8.2 19.7 9 21 9C19.7 9 19 9.8 19 11V13.5C19 15.5 19 16.5 17 16.5'/></g><g fill='#C9876A'><circle cx='7.5' cy='12' r='0.8'/><circle cx='11' cy='12' r='0.8'/><circle cx='14.5' cy='12' r='0.8'/></g></svg>
<svg style='position:absolute;left:277px;top:842px' width='22' height='18' viewBox='0 0 22 18'><g fill='none' stroke='#C9876A' stroke-width='1.4'><path d='M5 1.5C3 1.5 3 2.5 3 4.5V7C3 8.2 2.3 9 1 9C2.3 9 3 9.8 3 11V13.5C3 15.5 3 16.5 5 16.5'/><path d='M17 1.5C19 1.5 19 2.5 19 4.5V7C19 8.2 19.7 9 21 9C19.7 9 19 9.8 19 11V13.5C19 15.5 19 16.5 17 16.5'/></g><g fill='#C9876A'><circle cx='7.5' cy='12' r='0.8'/><circle cx='11' cy='12' r='0.8'/><circle cx='14.5' cy='12' r='0.8'/></g></svg>
</body></html>
